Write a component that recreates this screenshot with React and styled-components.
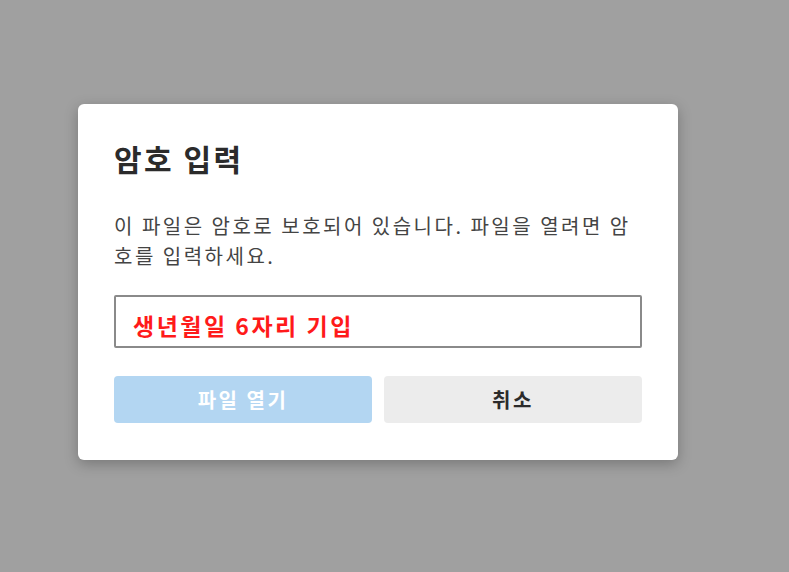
import React from "react";
import styled, { createGlobalStyle } from "styled-components";

const Global = createGlobalStyle`
  html, body { margin: 0; padding: 0; }
  body {
    background: #a0a0a0;
    font-family: "Noto Sans CJK KR", "Noto Sans", sans-serif;
  }
`;

const Backdrop = styled.div`
  width: 789px;
  height: 572px;
  background: #a0a0a0;
  padding: 104px 0 0 78px;
  box-sizing: border-box;
`;

const Dialog = styled.div`
  width: 600px;
  box-sizing: border-box;
  background: #ffffff;
  border-radius: 6px;
  box-shadow: 0 4px 14px rgba(0, 0, 0, 0.25);
  padding: 36px 36px 37px;
  display: flex;
  flex-direction: column;
`;

const Title = styled.h2`
  margin: 0;
  font-size: 30px;
  font-weight: 700;
  color: #2b2b2b;
  line-height: 36px;
  letter-spacing: 2.5px;
`;

const Message = styled.p`
  margin: 35px 0 0;
  font-size: 20px;
  line-height: 30px;
  color: #444;
  font-weight: 400;
  letter-spacing: 2.5px;
  word-break: break-all;
`;

const Field = styled.input`
  margin-top: 24px;
  height: 53px;
  box-sizing: border-box;
  border: 2px solid #8a8a8a;
  border-radius: 2px;
  padding: 6px 17px 0;
  font-family: inherit;
  font-size: 23px;
  font-weight: 700;
  letter-spacing: 2.5px;
  outline: none;
  &::placeholder {
    color: #ff1a1a;
    opacity: 1;
  }
`;

const Actions = styled.div`
  margin-top: 28px;
  display: grid;
  grid-template-columns: 1fr 1fr;
  gap: 12px;
`;

const Button = styled.button`
  height: 47px;
  border: none;
  border-radius: 4px;
  font-family: inherit;
  font-size: 20px;
  font-weight: 700;
  letter-spacing: 2.5px;
  background: ${(p) => (p.$primary ? "#b3d6f2" : "#ececec")};
  color: ${(p) => (p.$primary ? "#ffffff" : "#2b2b2b")};
  cursor: pointer;
`;

export default function App() {
  return (
    <>
      <Global />
      <Backdrop>
        <Dialog>
          <Title>암호 입력</Title>
          <Message>
            이 파일은 암호로 보호되어 있습니다. 파일을 열려면 암호를 입력하세요.
          </Message>
          <Field type="password" placeholder="생년월일 6자리 기입" />
          <Actions>
            <Button $primary disabled>파일 열기</Button>
            <Button>취소</Button>
          </Actions>
        </Dialog>
      </Backdrop>
    </>
  );
}
